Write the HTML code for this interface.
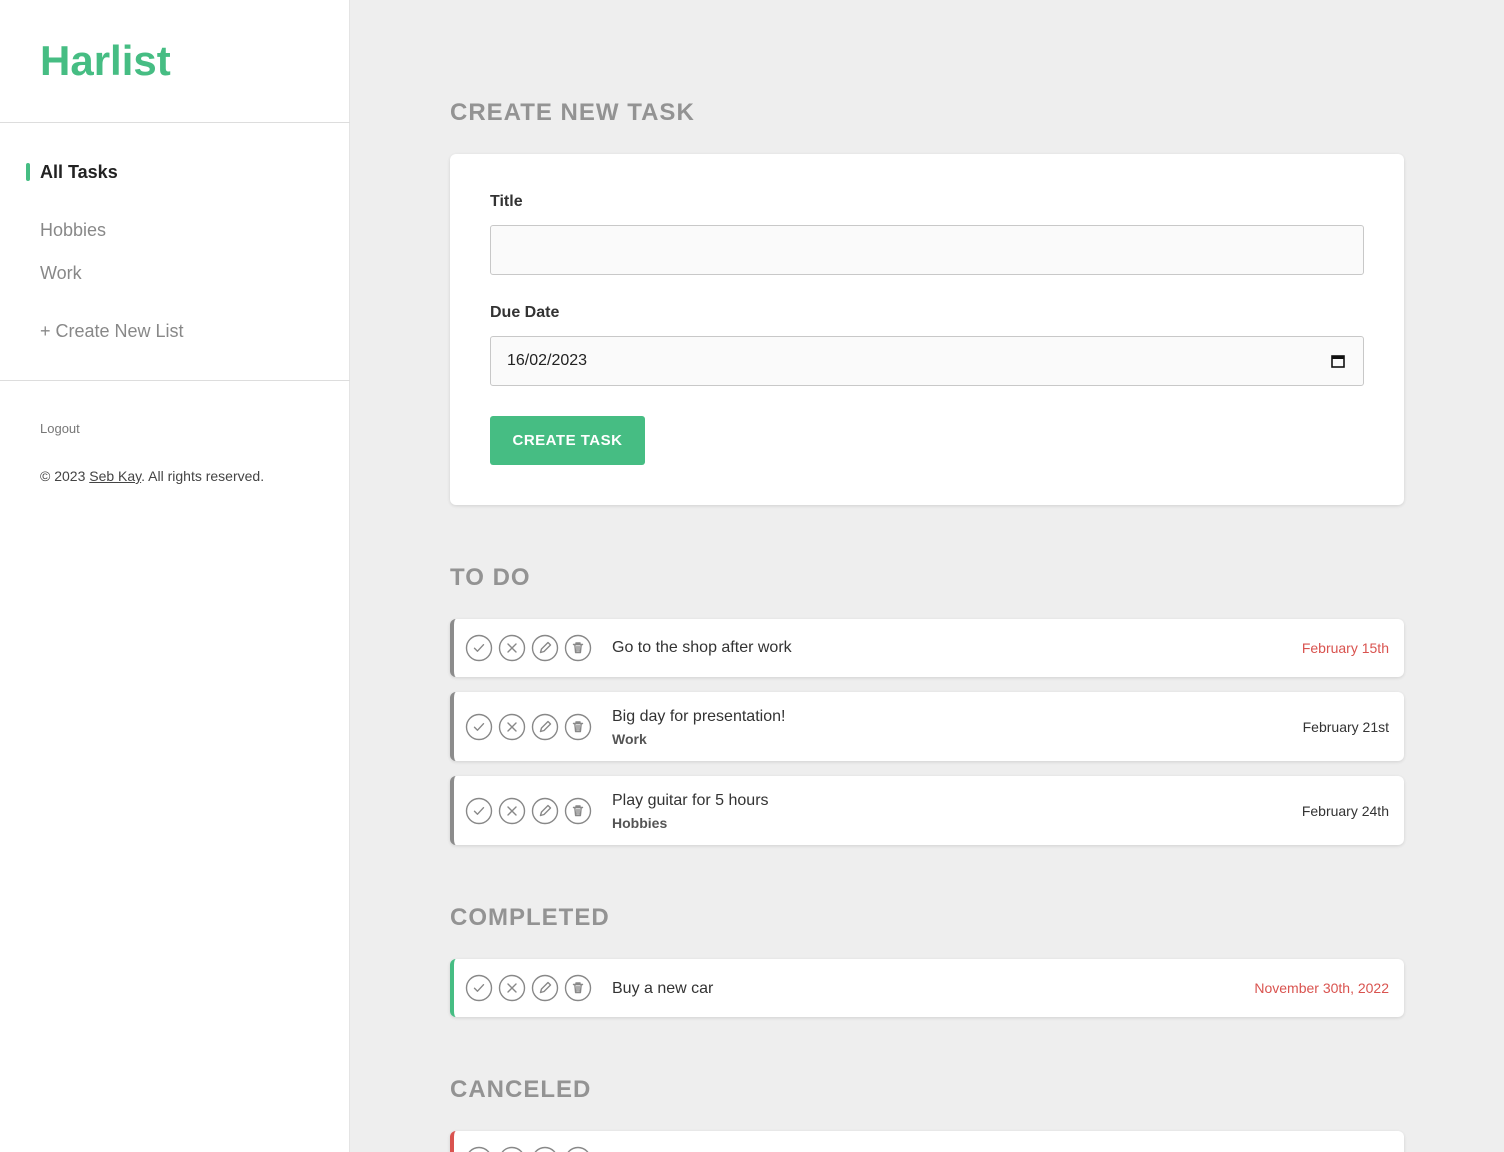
<!DOCTYPE html>
<html><head><style>
*{box-sizing:border-box;margin:0;padding:0}
html,body{width:1504px;height:1152px;overflow:hidden}
body{background:#eeeeee;font-family:"Liberation Sans",sans-serif;position:relative;color:#333}
.side{position:absolute;left:0;top:0;width:350px;height:1152px;background:#fff;border-right:1px solid #e4e4e4}
.logo{position:absolute;left:40px;top:37px;font-size:42px;font-weight:bold;color:#46bd83}
.hr{position:absolute;left:0;width:350px;height:1px;background:#ddd}
.nav{position:absolute;left:40px;font-size:18px;color:#888}
.h{position:absolute;left:450px;font-size:24px;color:#8a8a8a;letter-spacing:1px;font-weight:bold;opacity:.9}
.card{position:absolute;left:450px;width:954px;background:#fff;border-radius:6px;box-shadow:0 1px 3px rgba(0,0,0,.12)}
.lbl{position:absolute;left:40px;font-size:16px;font-weight:bold;color:#333}
.inp{position:absolute;left:40px;width:874px;height:50px;border:1px solid #c8c8c8;border-radius:3px;background:#fafafa}
.btn{position:absolute;left:40px;top:262px;width:155px;height:49px;background:#46bd83;border-radius:3px;color:#fff;font-size:15px;font-weight:bold;letter-spacing:.5px;text-align:center;line-height:49px}
.row{position:absolute;left:450px;width:954px;background:#fff;border-radius:6px;border-left:4px solid #8c8c8c;box-shadow:0 1px 3px rgba(0,0,0,.12);overflow:hidden}
.ic{position:absolute;left:11px;top:50%;margin-top:-14px;display:flex;gap:5px}
.t{position:absolute;left:158px;font-size:16px;color:#333}
.sub{position:absolute;left:158px;font-size:14px;font-weight:bold;color:#555}
.d{position:absolute;right:15px;top:50%;margin-top:-8px;font-size:14px;color:#333}
.red{color:#d9534f}
</style></head><body>
<svg width="0" height="0" style="position:absolute">
<defs>
<g id="icons" fill="none" stroke="#888" stroke-width="1.4" stroke-linecap="round" stroke-linejoin="round">
<circle cx="14" cy="14" r="12.5"/><path d="M9.5 14.2l3 3 6-6.5"/>
<circle cx="47" cy="14" r="12.5"/><path d="M43 10l8 8M51 10l-8 8"/>
<circle cx="80" cy="14" r="12.5"/><path d="M75.5 18.5l1-3.5 6.5-6.5 2.5 2.5-6.5 6.5z"/>
<circle cx="113" cy="14" r="12.5"/><path d="M108.5 10.5h9M111 10.5v-1.5h4v1.5M109.8 10.5l.8 8h4.8l.8-8M112 12.5v4.5M114 12.5v4.5"/>
</g></defs></svg>
<div class="side">
<div class="logo">Harlist</div>
<div class="hr" style="top:122px"></div>
<div style="position:absolute;left:26px;top:163px;width:4px;height:18px;background:#46bd83;border-radius:2px"></div>
<div class="nav" style="top:162px;color:#222;font-weight:bold">All Tasks</div>
<div class="nav" style="top:220px">Hobbies</div>
<div class="nav" style="top:263px">Work</div>
<div class="nav" style="top:321px">+ Create New List</div>
<div class="hr" style="top:380px"></div>
<div style="position:absolute;left:40px;top:421px;font-size:13px;color:#777">Logout</div>
<div style="position:absolute;left:40px;top:468px;font-size:14px;color:#444">© 2023 <u>Seb Kay</u>. All rights reserved.</div>
</div>

<div class="h" style="top:99px">CREATE NEW TASK</div>
<div class="card" style="top:154px;height:351px">
<div class="lbl" style="top:39px">Title</div>
<div class="inp" style="top:71px"></div>
<div class="lbl" style="top:150px">Due Date</div>
<div class="inp" style="top:182px"><span style="position:absolute;left:16px;top:15px;font-size:16px;color:#222">16/02/2023</span>
<svg style="position:absolute;right:18px;top:17px" width="14" height="14" viewBox="0 0 14 14"><rect x="1" y="2" width="12" height="11" fill="none" stroke="#111" stroke-width="1.6"/><rect x="1" y="2" width="12" height="3" fill="#111"/></svg></div>
<div class="btn">CREATE TASK</div>
</div>

<div class="h" style="top:564px">TO DO</div>

<div class="row" style="top:619px;height:58px">
<svg class="ic" width="128" height="28"><use href="#icons"/></svg>
<div class="t" style="top:20px">Go to the shop after work</div>
<div class="d red">February 15th</div></div>

<div class="row" style="top:692px;height:69px">
<svg class="ic" width="128" height="28"><use href="#icons"/></svg>
<div class="t" style="top:16px">Big day for presentation!</div>
<div class="sub" style="top:39px">Work</div>
<div class="d">February 21st</div></div>

<div class="row" style="top:776px;height:69px">
<svg class="ic" width="128" height="28"><use href="#icons"/></svg>
<div class="t" style="top:16px">Play guitar for 5 hours</div>
<div class="sub" style="top:39px">Hobbies</div>
<div class="d">February 24th</div></div>

<div class="h" style="top:904px">COMPLETED</div>
<div class="row" style="top:959px;height:58px;border-left-color:#46bd83">
<svg class="ic" width="128" height="28"><use href="#icons"/></svg>
<div class="t" style="top:21px">Buy a new car</div>
<div class="d red">November 30th, 2022</div></div>

<div class="h" style="top:1076px">CANCELED</div>
<div class="row" style="top:1131px;height:58px;border-left-color:#d9534f">
<svg class="ic" width="128" height="28"><use href="#icons"/></svg></div>
</body></html>
